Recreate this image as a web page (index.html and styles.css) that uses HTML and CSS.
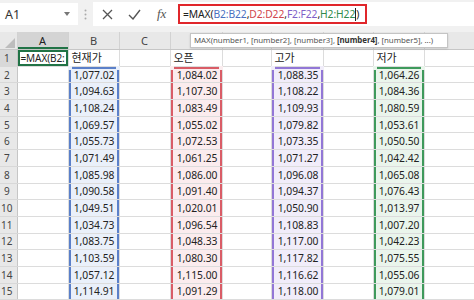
FILE: index.html
```html
<!DOCTYPE html>
<html>
<head>
	<meta charset="utf-8">
	<meta name="viewport" content="width=device-width, initial-scale=1">
	<title>MAX</title>
	<link rel="stylesheet" href="styles.css">
</head>
<body>
	<div class="app">
		<div class="toolbar">
			<div class="namebox">
				<span>A1</span>
				<svg class="caret" width="6" height="4" viewBox="0 0 6 4"><path d="M0 0h6L3 4z" fill="#777"/></svg>
			</div>
			<div class="grip">
				<svg width="3" height="11" viewBox="0 0 3 11"><circle cx="1.5" cy="1.5" r="1" fill="#aaa"/><circle cx="1.5" cy="5.5" r="1" fill="#aaa"/><circle cx="1.5" cy="9.5" r="1" fill="#aaa"/></svg>
			</div>
			<div class="fbar">
				<div class="ficons">
					<svg width="11" height="11" viewBox="0 0 11 11"><path d="M1 1l9 9M10 1l-9 9" stroke="#555" stroke-width="1.3" fill="none"/></svg>
					<svg width="13" height="11" viewBox="0 0 13 11"><path d="M1 6l4 4 7-9" stroke="#555" stroke-width="1.4" fill="none"/></svg>
					<span class="fx">fx</span>
				</div>
				<div class="formula">=MAX(<span class="c-blue">B2:B22</span>,<span class="c-red">D2:D22</span>,<span class="c-purple">F2:F22</span>,<span class="c-green">H2:H22</span><span class="cursor"></span>)</div>
			</div>
		</div>

		<div class="sheet">
			<table class="grid">
				<colgroup>
					<col class="w-rh"><col class="w-51"><col class="w-51"><col class="w-51"><col class="w-52"><col class="w-49"><col class="w-52"><col class="w-50"><col class="w-51"><col class="w-50">
				</colgroup>
				<thead>
					<tr>
						<th class="corner"><svg width="10" height="10" viewBox="0 0 10 10"><path d="M10 0v10H0z" fill="#bdbdbd"/></svg></th>
						<th class="sel">A</th><th>B</th><th>C</th><th></th><th></th><th></th><th></th><th></th><th></th>
					</tr>
				</thead>
				<tbody>
					<tr><th class="sel-row">1</th><td class="active">=MAX(B2:</td><td>현재가</td><td></td><td>오픈</td><td></td><td>고가</td><td></td><td>저가</td><td></td></tr>
					<tr><th>2</th><td></td><td class="num rb top">1,077.02</td><td></td><td class="num rd top">1,084.02</td><td></td><td class="num rf top">1,088.35</td><td></td><td class="num rh top">1,064.26</td><td></td></tr>
					<tr><th>3</th><td></td><td class="num rb">1,094.63</td><td></td><td class="num rd">1,107.30</td><td></td><td class="num rf">1,108.22</td><td></td><td class="num rh">1,084.36</td><td></td></tr>
					<tr><th>4</th><td></td><td class="num rb">1,108.24</td><td></td><td class="num rd">1,083.49</td><td></td><td class="num rf">1,109.93</td><td></td><td class="num rh">1,080.59</td><td></td></tr>
					<tr><th>5</th><td></td><td class="num rb">1,069.57</td><td></td><td class="num rd">1,055.02</td><td></td><td class="num rf">1,079.82</td><td></td><td class="num rh">1,053.61</td><td></td></tr>
					<tr><th>6</th><td></td><td class="num rb">1,055.73</td><td></td><td class="num rd">1,072.53</td><td></td><td class="num rf">1,073.35</td><td></td><td class="num rh">1,050.50</td><td></td></tr>
					<tr><th>7</th><td></td><td class="num rb">1,071.49</td><td></td><td class="num rd">1,061.25</td><td></td><td class="num rf">1,071.27</td><td></td><td class="num rh">1,042.42</td><td></td></tr>
					<tr><th>8</th><td></td><td class="num rb">1,085.98</td><td></td><td class="num rd">1,086.00</td><td></td><td class="num rf">1,096.08</td><td></td><td class="num rh">1,065.08</td><td></td></tr>
					<tr><th>9</th><td></td><td class="num rb">1,090.58</td><td></td><td class="num rd">1,091.40</td><td></td><td class="num rf">1,094.37</td><td></td><td class="num rh">1,076.43</td><td></td></tr>
					<tr><th>10</th><td></td><td class="num rb">1,049.51</td><td></td><td class="num rd">1,020.01</td><td></td><td class="num rf">1,050.90</td><td></td><td class="num rh">1,013.97</td><td></td></tr>
					<tr><th>11</th><td></td><td class="num rb">1,034.73</td><td></td><td class="num rd">1,096.54</td><td></td><td class="num rf">1,108.83</td><td></td><td class="num rh">1,007.20</td><td></td></tr>
					<tr><th>12</th><td></td><td class="num rb">1,083.75</td><td></td><td class="num rd">1,048.33</td><td></td><td class="num rf">1,117.00</td><td></td><td class="num rh">1,042.23</td><td></td></tr>
					<tr><th>13</th><td></td><td class="num rb">1,103.59</td><td></td><td class="num rd">1,080.30</td><td></td><td class="num rf">1,117.82</td><td></td><td class="num rh">1,075.55</td><td></td></tr>
					<tr><th>14</th><td></td><td class="num rb">1,057.12</td><td></td><td class="num rd">1,115.00</td><td></td><td class="num rf">1,116.62</td><td></td><td class="num rh">1,055.06</td><td></td></tr>
					<tr><th>15</th><td></td><td class="num rb">1,114.91</td><td></td><td class="num rd">1,091.29</td><td></td><td class="num rf">1,118.00</td><td></td><td class="num rh">1,079.01</td><td></td></tr>
				</tbody>
			</table>

			<div class="tip">MAX(number1, [number2], [number3], <b>[number4]</b>, [number5], ...)</div>
		</div>
	</div>
</body>
</html>
```

FILE: styles.css
```css
body{
	margin: 0;
	background: #fff;
	font-family: "Noto Sans", "Noto Sans CJK KR", sans-serif;
	color: #222;
}
.app{
	width: 474px;
	height: 300px;
	overflow: hidden;
}

/* formula bar */
.toolbar{
	height: 32px;
	background: #f1f1f1;
	display: flex;
	align-items: flex-start;
	padding-top: 3px;
	box-sizing: border-box;
}
.namebox{
	width: 78px;
	height: 22px;
	box-sizing: border-box;
	background: #fff;
	display: flex;
	align-items: center;
	justify-content: space-between;
	padding: 0 8px 0 5px;
	font-size: 12.5px;
	color: #333;
}
.grip{
	width: 15px;
	height: 22px;
	display: flex;
	align-items: center;
	justify-content: center;
}
.fbar{
	flex: 1;
	height: 24px;
	margin-top: -1px;
	background: #fff;
	display: flex;
	align-items: center;
}
.ficons{
	width: 85px;
	display: flex;
	align-items: center;
	gap: 15px;
	padding-left: 9px;
	box-sizing: border-box;
}
.fx{
	font-family: "Liberation Serif", serif;
	font-style: italic;
	font-size: 13px;
	color: #555;
	margin-left: 1px;
}
.formula{
	width: 189px;
	height: 20px;
	box-sizing: border-box;
	border: 2px solid #e0262b;
	display: flex;
	align-items: center;
	padding: 0 0 0 3px;
	font-size: 10.3px;
	letter-spacing: -0.1px;
	color: #222;
	white-space: nowrap;
}
.cursor{
	display: inline-block;
	width: 1px;
	height: 13px;
	background: #222;
}
.c-blue{ color: #4a6fc0; }
.c-red{ color: #d0454d; }
.c-purple{ color: #8060c8; }
.c-green{ color: #2f8a4a; }

/* sheet */
.sheet{
	position: relative;
}
.grid{
	border-collapse: collapse;
	table-layout: fixed;
	width: 474px;
}
.w-rh{ width: 17px; }
.w-49{ width: 49px; }
.w-50{ width: 50px; }
.w-51{ width: 51px; }
.w-52{ width: 52px; }

.grid thead th{
	height: 16px;
	padding: 0;
	background: #e8e8e8;
	border-right: 1px solid #d2d2d2;
	border-bottom: 1px solid #c6c6c6;
	font-weight: normal;
	font-size: 11px;
	color: #444;
	text-align: center;
}
.grid thead th.corner{
	text-align: right;
	vertical-align: bottom;
	padding: 0 2px 1px 0;
	line-height: 0;
}
.grid thead th.sel{
	background: #d4d4d4;
	color: #222;
	box-shadow: inset 0 -2px #217346;
}
.grid tbody tr{
	height: 16.7px;
}
.grid tbody th{
	padding: 0 3px 0 0;
	background: #e8e8e8;
	border-right: 1px solid #c6c6c6;
	border-bottom: 1px solid #d8d8d8;
	font-weight: normal;
	font-size: 10px;
	color: #444;
	text-align: center;
}
.grid tbody th.sel-row{
	background: #d8d8d8;
}
.grid td{
	padding: 0 3px;
	border-right: 1px solid #dcdcdc;
	border-bottom: 1px solid #dcdcdc;
	font-size: 11px;
	white-space: nowrap;
	overflow: hidden;
	line-height: 14px;
}
.grid td.num{
	text-align: right;
	font-size: 10.3px;
	padding-right: 4px;
}
.grid td.active{
	box-shadow: inset 0 0 0 2px #217346;
	padding-left: 3px;
	padding-right: 0;
	font-size: 10px;
	letter-spacing: -0.1px;
	text-overflow: clip;
}

/* referenced ranges */
.rb{ background: #eaf0fa; box-shadow: inset 2px 0 #5b80c9, inset -2px 0 #5b80c9; }
.rd{ background: #fbecee; box-shadow: inset 2px 0 #d95c66, inset -2px 0 #d95c66; }
.rf{ background: #f1edfa; box-shadow: inset 2px 0 #9277d6, inset -2px 0 #9277d6; }
.rh{ background: #eaf5ec; box-shadow: inset 2px 0 #3f9a5c, inset -2px 0 #3f9a5c; }
.rb.top{ box-shadow: inset 2px 0 #5b80c9, inset -2px 0 #5b80c9, inset 0 2px #5b80c9; }
.rd.top{ box-shadow: inset 2px 0 #d95c66, inset -2px 0 #d95c66, inset 0 2px #d95c66; }
.rf.top{ box-shadow: inset 2px 0 #9277d6, inset -2px 0 #9277d6, inset 0 2px #9277d6; }
.rh.top{ box-shadow: inset 2px 0 #3f9a5c, inset -2px 0 #3f9a5c, inset 0 2px #3f9a5c; }

.grid td.top{
	position: relative;
	overflow: visible;
}
.grid td.top::before,
.grid td.top::after{
	content: "";
	position: absolute;
	top: -1px;
	width: 4px;
	height: 4px;
	background: inherit;
}
.grid td.top::before{ left: -1px; }
.grid td.top::after{ right: -1px; }
.rb.top::before, .rb.top::after{ background: #4a6fc0; }
.rd.top::before, .rd.top::after{ background: #d0454d; }
.rf.top::before, .rf.top::after{ background: #8060c8; }
.rh.top::before, .rh.top::after{ background: #2f8a4a; }

/* function tooltip */
.tip{
	position: absolute;
	top: 1px;
	left: 190px;
	width: 258px;
	height: 15px;
	box-sizing: border-box;
	background: #fff;
	border: 1px solid #c4c4c4;
	box-shadow: 0 1px 2px rgba(0,0,0,.12);
	padding: 0 3px;
	font-size: 7.9px;
	letter-spacing: -0.05px;
	line-height: 13px;
	color: #555;
	white-space: nowrap;
	overflow: hidden;
}
.tip b{
	color: #333;
}
```
